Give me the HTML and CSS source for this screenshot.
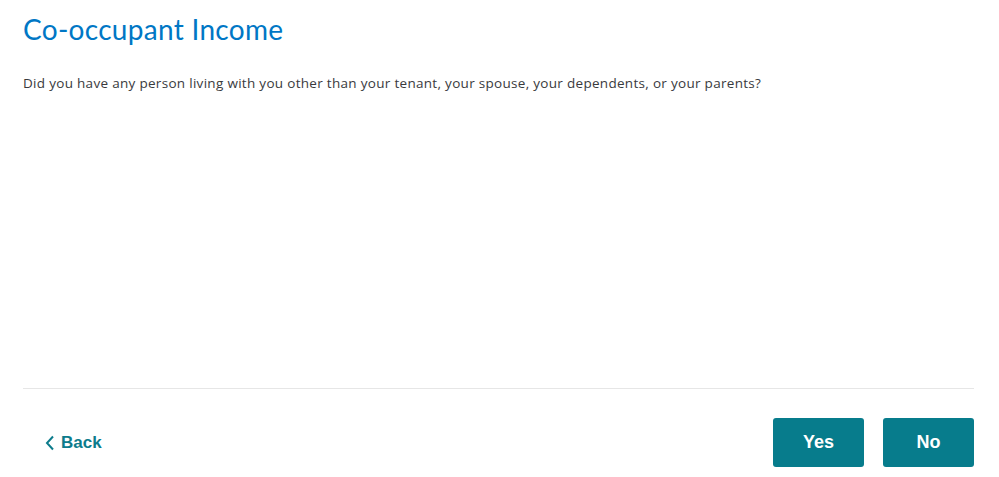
FILE: index.html
```html
<!doctype html>
<html lang="en">
	<head>
		<meta charset="UTF-8" />
		<title>Co-occupant Income</title>
		<link rel="stylesheet" href="styles.css">
	</head>
	<body>
		<section class="page">
			<header class="intro">
				<h1 class="title">Co-occupant Income</h1>
				<p class="question">Did you have any person living with you other than your tenant, your spouse, your dependents, or your parents?</p>
			</header>
			<footer class="actions">
				<a href="javascript:;" class="back">
					<svg class="chev" width="10" height="16" viewBox="0 0 10 16"><path d="M8 1.5 L2 8 L8 14.5" fill="none" stroke="currentColor" stroke-width="2"/></svg>
					<span>Back</span>
				</a>
				<div class="choices">
					<button class="btn">Yes</button>
					<button class="btn">No</button>
				</div>
			</footer>
		</section>
	</body>
</html>
```
FILE: styles.css
```css
* {
	margin: 0;
	padding: 0;
	box-sizing: border-box;
}

body {
	background: #fff;
	font-family: Lato, "Open Sans", sans-serif;
}

.page {
	width: 999px;
	height: 477px;
	padding: 0 25px 0 23px;
	display: flex;
	flex-direction: column;
}

.intro {
	flex: 1;
}

.title {
	margin-top: 11px;
	font-size: 28px;
	font-weight: 400;
	line-height: 36px;
	color: #0077c5;
	letter-spacing: 0.3px;
}

.question {
	margin-top: 27px;
	font-family: "Open Sans", sans-serif;
	font-size: 13.5px;
	line-height: 18px;
	letter-spacing: 0.3px;
	color: #393a3d;
}

.actions {
	border-top: 1px solid #e6e6e6;
	padding: 29px 0 10px 22px;
	display: flex;
	align-items: center;
	justify-content: space-between;
}

.back {
	display: flex;
	align-items: center;
	gap: 6px;
	color: #0d7c8c;
	text-decoration: none;
	font-family: "Liberation Sans", Arial, sans-serif;
	font-weight: bold;
	font-size: 17px;
}

.choices {
	display: flex;
	gap: 19px;
}

.btn {
	width: 91px;
	height: 49px;
	border: none;
	border-radius: 3px;
	background: #077c8c;
	color: #fff;
	font-family: "Liberation Sans", Arial, sans-serif;
	font-weight: bold;
	font-size: 18px;
}
```
